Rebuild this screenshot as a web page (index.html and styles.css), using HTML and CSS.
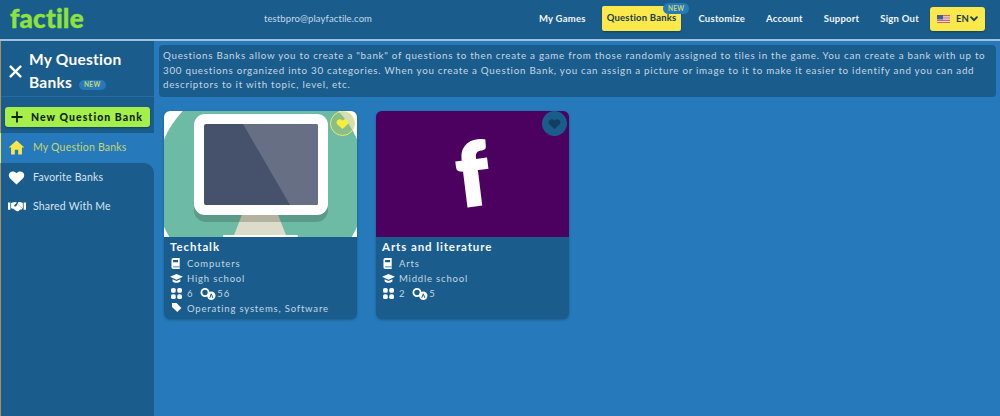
FILE: index.html
```html
<!DOCTYPE html>
<html lang="en">
<head>
<meta charset="utf-8">
<title>Factile - My Question Banks</title>
<link rel="stylesheet" href="styles.css">
</head>
<body>
<header class="topbar">
  <div class="logo">factile</div>
  <div class="email">testbpro@playfactile.com</div>
  <nav class="nav">
    <a class="nav-link">My Games</a>
    <a class="nav-link nav-active">Question Banks<span class="new-top">NEW</span></a>
    <a class="nav-link">Customize</a>
    <a class="nav-link">Account</a>
    <a class="nav-link">Support</a>
    <a class="nav-link">Sign Out</a>
    <a class="lang">
      <svg class="flag" viewBox="0 0 13 8"><rect width="13" height="8" fill="#e8e0e4"/><path d="M0 0h13v1.200H0zM0 2.400h13v1.200H0zM0 4.800h13V6H0zM0 7h13v1H0z" fill="#d4606c"/><rect width="6" height="4.400" fill="#4a5a94"/></svg>
      <span>EN</span>
      <svg class="chev" viewBox="0 0 10 7"><path d="M1.300 1.300 5 5l3.700-3.700" fill="none" stroke="#1a3a50" stroke-width="2.200" stroke-linecap="round"/></svg>
    </a>
  </nav>
</header>
<div class="layout">
  <aside class="sidebar">
    <div class="side-head">
      <svg class="close" viewBox="0 0 12 12"><path d="M1.500 1.500l9 9M10.500 1.500l-9 9" stroke="#fff" stroke-width="2.200" stroke-linecap="round"/></svg>
      <h1 class="side-title">My Question Banks <span class="new-side">NEW</span></h1>
    </div>
    <div class="side-action">
      <button class="new-btn"><svg class="plus" viewBox="0 0 12 12"><path d="M6 .5v11M.5 6h11" stroke="#10240a" stroke-width="1.800"/></svg>New Question Bank</button>
    </div>
    <a class="side-item side-current">
      <svg class="side-ico" viewBox="0 0 18 16"><path d="M9 .5 .6 8h2.600v7.500h4V10.500h3.600v5h4V8h2.600z" fill="#f6e84a"/></svg>
      My Question Banks
    </a>
    <div class="side-rest">
      <a class="side-item">
        <svg class="side-ico" viewBox="0 0 18 16"><path d="M9 15.500 2 8.700C.2 6.900.4 3.900 2.400 2.400 4.400 1 7.400 1.300 9 3.500 10.600 1.300 13.600 1 15.600 2.400c2 1.500 2.200 4.500.4 6.300z" fill="#fff"/></svg>
        Favorite Banks
      </a>
      <a class="side-item">
        <svg class="side-ico side-hands" viewBox="0 0 20 12"><path d="M0 1.500h2.600v8H0zM17.400 1.500H20v8h-2.600z" fill="#fff"/><path d="M3.400 2 7 1l3 .6-3 2.900c-.6.900.8 2 1.800 1.300l2.400-1.900 5 4.700-.8.600-1.700.1-2.300 2-1.500.1-1.500-.9-2.600-1.900-2.400-.7zM11.500 1 13.600 1l2.900 1v5.800l-.4.2-4.600-4.300-1.700.8z" fill="#fff"/></svg>
        Shared With Me
      </a>
    </div>
  </aside>
  <main class="content">
    <p class="intro">Questions Banks allow you to create a "bank" of questions to then create a game from those randomly assigned to tiles in the game. You can create a bank with up to 300 questions organized into 30 categories. When you create a Question Bank, you can assign a picture or image to it to make it easier to identify and you can add descriptors to it with topic, level, etc.</p>
    <div class="cards">
      <article class="card">
        <div class="thumb thumb-tech">
          <svg class="monitor" viewBox="0 0 193 126" preserveAspectRatio="none">
            <rect width="193" height="126" fill="#fff"/>
            <circle cx="96.500" cy="72" r="106" fill="#6dbba4"/>
            <path d="M78 104h36l8 20H70z" fill="#dcdccb"/>
            <path d="M76 104h40l2 7H74z" fill="#b3b2a0"/>
            <rect x="59" y="124" width="75" height="2" rx="1" fill="#fff"/>
            <rect x="30" y="10" width="134" height="101" rx="12" fill="#5b9a88"/>
            <path d="M78 104h36l3 7H75z" fill="#b3b2a0"/>
            <rect x="30" y="3" width="134" height="101" rx="11" fill="#fff"/>
            <rect x="40" y="13" width="114" height="81" rx="2" fill="#46526c"/>
            <path d="M79 13h73a2 2 0 0 1 2 2v77a2 2 0 0 1-2 2H126z" fill="#676f84"/>
          </svg>
          <span class="fav fav-on"><svg viewBox="0 0 18 16"><path d="M9 15 2 8.700C.2 6.900.4 3.900 2.400 2.400 4.400 1 7.400 1.300 9 3.500 10.600 1.300 13.600 1 15.600 2.400c2 1.500 2.200 4.500.4 6.300z" fill="#f5ef3c"/></svg></span>
        </div>
        <div class="card-body">
          <h2 class="card-title">Techtalk</h2>
          <div class="row"><svg class="ico" viewBox="0 0 13 12"><path d="M1 1.800A1.800 1.800 0 0 1 2.800 0H10v12H2.800A1.800 1.800 0 0 1 1 10.200z" fill="#fff"/><path d="M2.800 2.300h5.400v2.400H2.800zM2.800 9.200H10v1H2.800z" fill="#1a5d8c"/></svg><span class="gap">Computers</span></div>
          <div class="row"><svg class="ico" viewBox="0 0 13 11"><path d="M6.500 1 0 3.800l6.500 2.900L13 3.800zM2.600 6.300v2.200c1.800 1.700 6 1.700 7.800 0V6.300L6.500 8z" fill="#fff"/></svg><span class="gap">High school</span></div>
          <div class="row"><svg class="ico" viewBox="0 0 13 12"><rect x=".5" width="5.200" height="5.200" rx="2" fill="#fff"/><rect x="7.300" width="5.200" height="5.200" rx="2" fill="#fff"/><rect x=".5" y="6.800" width="5.200" height="5.200" rx="2" fill="#fff"/><rect x="7.300" y="6.800" width="5.200" height="5.200" rx="2" fill="#fff"/></svg><span class="gap">6</span><svg class="qa" viewBox="0 0 16 12"><circle cx="5" cy="4.500" r="3.600" fill="none" stroke="#fff" stroke-width="1.800"/><circle cx="11.300" cy="7.800" r="4.200" fill="#fff"/><path d="M9.800 9.800 11.300 5.800l1.500 4" stroke="#1a5d8c" fill="none"/></svg><span>56</span></div>
          <div class="row"><svg class="ico ico-tag" viewBox="0 0 13 11"><path d="M1 0h5.500l6 6-5 5-6.500-6z" fill="#fff"/></svg><span class="gap">Operating systems, Software</span></div>
        </div>
      </article>
      <article class="card">
        <div class="thumb thumb-arts">
          <span class="big-f">f</span>
          <span class="fav fav-off"><svg viewBox="0 0 18 16"><path d="M9 15 2 8.700C.2 6.900.4 3.900 2.400 2.400 4.400 1 7.400 1.300 9 3.500 10.600 1.300 13.600 1 15.600 2.400c2 1.500 2.200 4.500.4 6.300z" fill="#123f60"/></svg></span>
        </div>
        <div class="card-body">
          <h2 class="card-title">Arts and literature</h2>
          <div class="row"><svg class="ico" viewBox="0 0 13 12"><path d="M1 1.800A1.800 1.800 0 0 1 2.800 0H10v12H2.800A1.800 1.800 0 0 1 1 10.200z" fill="#fff"/><path d="M2.800 2.300h5.400v2.400H2.800zM2.800 9.200H10v1H2.800z" fill="#1a5d8c"/></svg><span class="gap">Arts</span></div>
          <div class="row"><svg class="ico" viewBox="0 0 13 11"><path d="M6.500 1 0 3.800l6.500 2.900L13 3.800zM2.600 6.300v2.200c1.800 1.700 6 1.700 7.800 0V6.300L6.500 8z" fill="#fff"/></svg><span class="gap">Middle school</span></div>
          <div class="row"><svg class="ico" viewBox="0 0 13 12"><rect x=".5" width="5.200" height="5.200" rx="2" fill="#fff"/><rect x="7.300" width="5.200" height="5.200" rx="2" fill="#fff"/><rect x=".5" y="6.800" width="5.200" height="5.200" rx="2" fill="#fff"/><rect x="7.300" y="6.800" width="5.200" height="5.200" rx="2" fill="#fff"/></svg><span class="gap">2</span><svg class="qa" viewBox="0 0 16 12"><circle cx="5" cy="4.500" r="3.600" fill="none" stroke="#fff" stroke-width="1.800"/><circle cx="11.300" cy="7.800" r="4.200" fill="#fff"/><path d="M9.800 9.800 11.300 5.800l1.500 4" stroke="#1a5d8c" fill="none"/></svg><span>5</span></div>
        </div>
      </article>
    </div>
  </main>
</div>
</body>
</html>
```
FILE: styles.css
```css
* { box-sizing: border-box; }
html, body { margin: 0; height: 100%; }
body {
  background: #267abb;
  font-family: "Lato", "Liberation Sans", sans-serif;
  color: #fff;
  height: 416px;
  overflow: hidden;
  display: flex;
  flex-direction: column;
}
.topbar {
  height: 41px;
  flex: none;
  background: #1a5d8c;
  border-bottom: 2px solid #9fc0de;
  display: flex;
  align-items: center;
  padding: 0 15px 2px 10px;
}
.logo {
  font-family: "Lato", sans-serif;
  font-weight: 900;
  font-size: 26px;
  line-height: 1;
  color: #8ee23c;
  width: 254px;
  letter-spacing: 0.2px;
  margin-top: -2px;
  -webkit-text-stroke: 0.4px #8ee23c;
}
.email { font-size: 9.500px; color: #c4d8e8; letter-spacing: 0.1px; }
.nav { margin-left: auto; display: flex; align-items: center; }
.nav-link {
  position: relative;
  font-size: 9.500px;
  font-weight: 700;
  letter-spacing: 0.24px;
  color: #f2f6fa;
  margin-right: 21px;
  white-space: nowrap;
}
.nav-active {
  background: #fbe84b;
  color: #1c3a4c;
  padding: 6px 5px 7px;
  border-radius: 2px;
  margin: 0 17px 0 -5px;
  box-shadow: 0 1px 2px rgba(0,0,0,.3);
  line-height: 12px;
  letter-spacing: 0.2px;
}
.new-top {
  position: absolute;
  top: -3px;
  right: -8px;
  background: #267abb;
  color: #c9d86a;
  font-size: 6.500px;
  line-height: 11px;
  padding: 0 5px;
  border-radius: 6px;
  letter-spacing: 0.3px;
}
.lang {
  margin-left: -10px;
  background: #fbe84b;
  color: #1c3a4c;
  width: 55px;
  height: 24px;
  border-radius: 3px;
  box-shadow: 0 1px 2px rgba(0,0,0,.3);
  display: flex;
  align-items: center;
  font-size: 9.500px;
  font-weight: 700;
  padding-left: 7px;
}
.flag { width: 13px; height: 8px; margin-right: 6px; }
.chev { width: 8px; height: 6px; margin-left: 1px; }

.layout { flex: 1; display: flex; min-height: 0; }
.sidebar {
  width: 154px;
  flex: none;
  display: flex;
  flex-direction: column;
  border-left: 1px solid #a98f62;
}
.side-head {
  background: #1a5d8c;
  height: 56px;
  flex: none;
  display: flex;
  align-items: center;
  padding: 5px 0 0 8px;
  border-bottom: 1px solid #236da3;
}
.close { width: 13px; height: 13px; flex: none; margin-right: 7px; }
.side-title {
  margin: 0;
  font-size: 15.500px;
  font-weight: 700;
  line-height: 23.500px;
  color: #fff;
  letter-spacing: 0.25px;
}
.new-side {
  display: inline-block;
  vertical-align: 1px;
  background: #267abb;
  color: #c9d86a;
  font-size: 6.500px;
  line-height: 10px;
  padding: 0 5px;
  border-radius: 6px;
  margin-left: 3px;
  letter-spacing: 0.3px;
}
.side-action {
  background: #1a5d8c;
  height: 36px;
  flex: none;
  padding: 10px 4px 0 4px;
}
.new-btn {
  width: 145px;
  height: 20px;
  background: #a5ef4a;
  color: #10240a;
  border: 0;
  border-radius: 3px;
  box-shadow: 0 1px 2px rgba(0,0,0,.3);
  font-family: "Lato", sans-serif;
  font-weight: 900;
  font-size: 10.500px;
  letter-spacing: 1.05px;
  display: flex;
  align-items: center;
  padding: 0 0 0 6px;
  white-space: nowrap;
}
.plus { width: 12px; height: 12px; margin-right: 8px; flex: none; }
.side-item {
  height: 29px;
  display: flex;
  align-items: center;
  font-size: 10.500px;
  color: #d8e4ee;
  letter-spacing: 0.2px;
  padding: 0 0 1px 7px;
}
.side-current {
  height: 30px;
  background: #267abb;
  color: #c6d66c;
  border-left: 1px solid #f6e84a;
  margin-left: -1px;
  padding: 0 0 2px 7px;
  flex: none;
}
.side-ico { width: 17px; height: 15px; margin-right: 8px; flex: none; }
.side-hands { width: 18px; height: 11px; margin: 0 7px 0 0; }
.side-rest {
  flex: 1;
  background: #1a5d8c;
  border-top-right-radius: 10px;
}
.content { flex: 1; min-width: 0; padding: 4px 4px 0 5px; }
.intro {
  margin: 0;
  height: 52px;
  background: #1a5d8c;
  border-radius: 4px;
  padding: 3px 5px 0 4px;
  font-size: 9.800px;
  line-height: 14.700px;
  letter-spacing: 0.72px;
  color: #c6d6e4;
}
.cards { display: flex; gap: 19px; padding: 14px 0 0 5px; }
.card {
  width: 193px;
  height: 208px;
  background: #1a5d8c;
  border-radius: 6px;
  overflow: hidden;
  box-shadow: 0 1px 3px rgba(0,0,0,.25);
}
.thumb { position: relative; height: 126px; overflow: hidden; }
.thumb-arts { background: #4c0060; display: flex; justify-content: center; }
.monitor { display: block; width: 100%; height: 100%; }
.big-f {
  font-family: "Lato", sans-serif;
  font-weight: 900;
  font-size: 86px;
  line-height: 1;
  color: #fff;
  -webkit-text-stroke: 3px #fff;
  transform: rotate(-7deg);
  margin: 18px 0 0 3px;
}
.fav {
  position: absolute;
  top: 0;
  right: 2px;
  width: 25px;
  height: 25px;
  border-radius: 50%;
  display: flex;
  align-items: center;
  justify-content: center;
}
.fav svg { width: 13px; height: 12px; }
.fav-on { background: rgba(170,190,110,.5); border: 1px solid #e4ec66; }
.fav-off { background: #1a5d8c; }
.card-body { padding: 3px 6px 0 6px; }
.card-title {
  margin: 0 0 2px;
  font-size: 11.500px;
  font-weight: 700;
  letter-spacing: 0.9px;
  line-height: 14px;
  color: #f4f8fb;
}
.row {
  display: flex;
  align-items: center;
  height: 15px;
  font-size: 9.500px;
  letter-spacing: 0.82px;
  color: #c4d6e4;
  white-space: nowrap;
}
.ico { width: 13px; height: 11px; flex: none; margin-right: 4px; }
.ico-tag { height: 9px; margin-top: -2px; }
.gap { margin-left: 0; }
.qa { width: 16px; height: 12px; margin: 0 1px 0 7px; flex: none; }
```
